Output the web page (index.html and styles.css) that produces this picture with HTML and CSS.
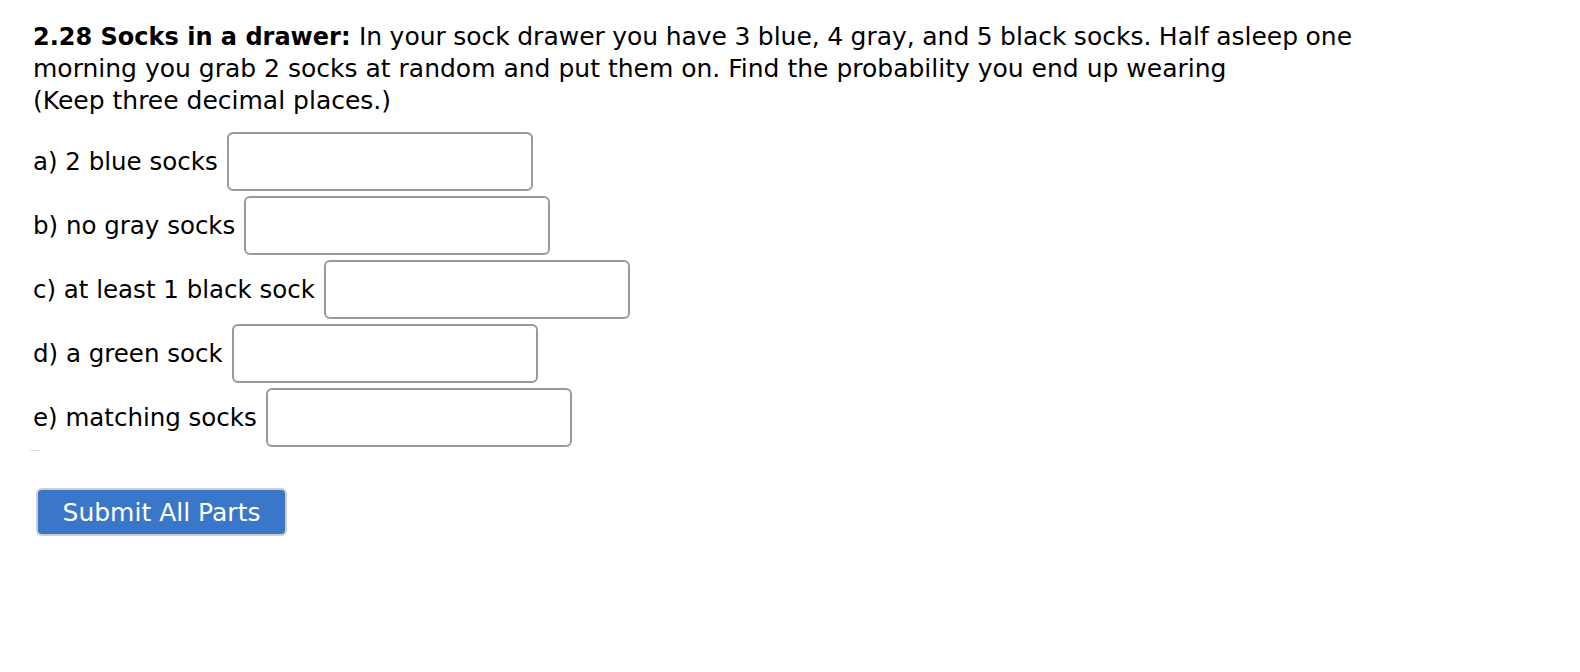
FILE: index.html
```html
<!DOCTYPE html>
<html>
<head>
<meta charset="utf-8">
<link rel="stylesheet" href="styles.css">
</head>
<body>
<div class="problem">
  <p class="question"><span class="first"><b class="title">2.28 Socks in a drawer:</b> In your sock drawer you have 3 blue, 4 gray, and 5 black socks. Half asleep one</span><br>morning you grab 2 socks at random and put them on. Find the probability you end up wearing<br>(Keep three decimal places.)</p>
  <div class="parts">
    <div class="part"><span class="label">a) 2 blue socks</span><input class="answer" type="text"></div>
    <div class="part"><span class="label">b) no gray socks</span><input class="answer" type="text"></div>
    <div class="part"><span class="label">c) at least 1 black sock</span><input class="answer" type="text"></div>
    <div class="part"><span class="label">d) a green sock</span><input class="answer" type="text"></div>
    <div class="part"><span class="label">e) matching socks</span><input class="answer" type="text"></div>
  </div>
  <div class="rule"></div>
  <button class="submit" type="button">Submit All Parts</button>
</div>
</body>
</html>
```
FILE: styles.css
```css
html, body {
  margin: 0;
  padding: 0;
  background: #fff;
}
body {
  font-family: "DejaVu Sans", sans-serif;
  font-size: 25px;
  color: #000;
}
.problem {
  padding: 21px 0 0 33px;
}
.question {
  margin: 0;
  line-height: 32px;
}
.first {
  word-spacing: -0.5px;
}
.title {
  font-size: 24px;
  margin-right: 1px;
  word-spacing: 0;
}
.parts {
  display: flex;
  flex-direction: column;
  gap: 5px;
  margin-top: 15px;
}
.part {
  display: flex;
  align-items: center;
  gap: 9px;
}
.label {
  font-size: 24.5px;
}
.answer {
  box-sizing: border-box;
  width: 306px;
  height: 59px;
  border: 2px solid #999;
  border-radius: 6px;
  background: #fff;
  margin: 0;
  font: inherit;
}
.rule {
  width: 10px;
  height: 1px;
  background: #ddd;
  margin: 3px 0 0 -3px;
}
.submit {
  margin-top: 37px;
  margin-left: 3px;
  width: 251px;
  height: 48px;
  background: #3a77c9;
  color: #fff;
  border: 2px solid #ccc;
  border-radius: 6px;
  font: inherit;
  font-size: 25px;
  padding: 0;
}
```
